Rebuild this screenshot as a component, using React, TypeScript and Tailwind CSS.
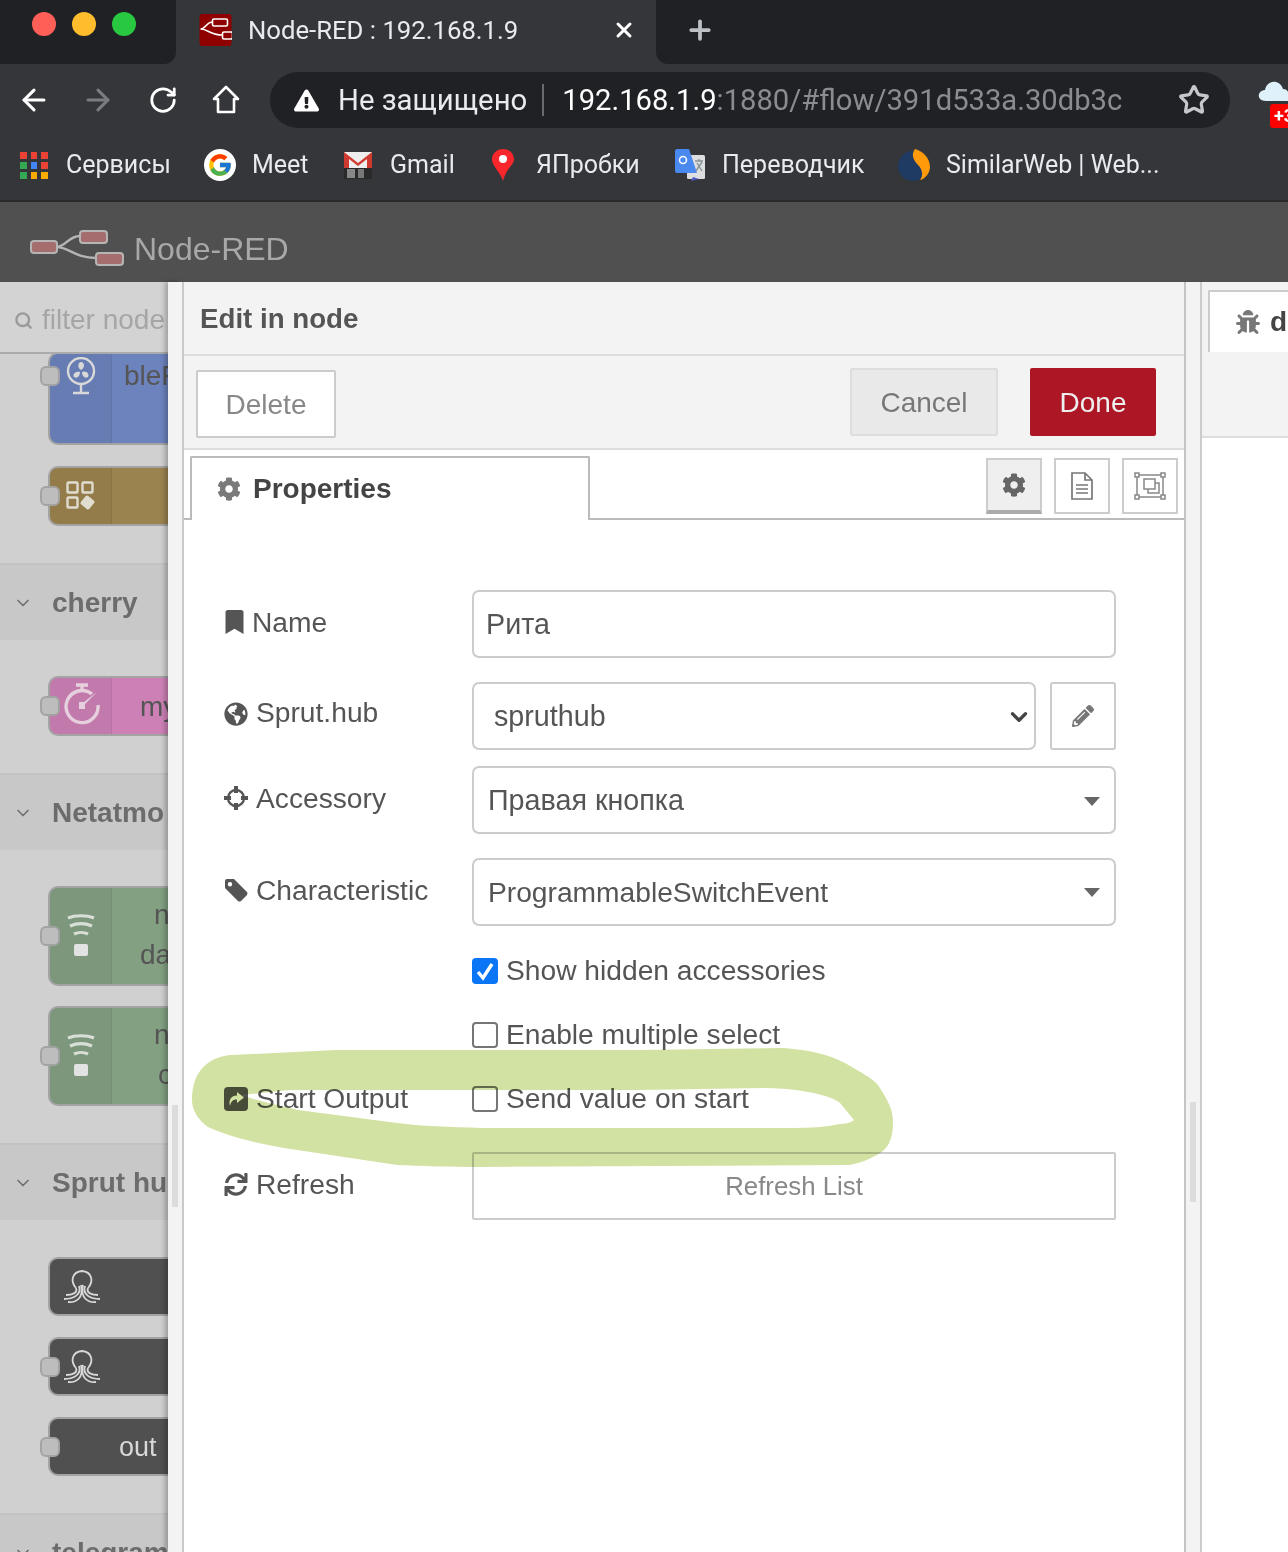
import { ReactNode } from "react";
import { ArrowLeft, ArrowRight, RotateCw, Star, Plus, X, ChevronDown, Search } from "lucide-react";
import { FaBookmark, FaGlobeAmericas, FaSync, FaCog, FaBug, FaPencilAlt, FaExclamationTriangle } from "react-icons/fa";
import { FcGoogle } from "react-icons/fc";

const chrome = "font-['Roboto',sans-serif]";
const app = "font-['Liberation_Sans',Arial,sans-serif]";

function NodeRedMark({ fill, stroke, className }: { fill: string; stroke: string; className?: string }) {
  return (
    <svg viewBox="0 0 94 36" className={className}>
      <path d="M26 17 C36 17 38 6 50 6 M26 17 C40 17 44 28 66 28" fill="none" stroke={stroke} strokeWidth="2.5" />
      <rect x="1" y="11" width="26" height="12" rx="3" fill={fill} stroke={stroke} strokeWidth="2" />
      <rect x="50" y="1" width="27" height="12" rx="3" fill={fill} stroke={stroke} strokeWidth="2" />
      <rect x="66" y="23" width="27" height="12" rx="3" fill={fill} stroke={stroke} strokeWidth="2" />
    </svg>
  );
}

function Bookmark({ icon, label, className }: { icon: ReactNode; label: string; className: string }) {
  return (
    <div className={`flex items-center shrink-0 ${className}`}>
      {icon}
      <span className="text-[25px] text-[#e8eaed] whitespace-nowrap">{label}</span>
    </div>
  );
}

function BrowserChrome() {
  const apps = ["#ea4335", "#ea4335", "#ea4335", "#34a853", "#4285f4", "#ea4335", "#34a853", "#f9ab00", "#f9ab00"];
  return (
    <div className={`${chrome} bg-[#35363a] shrink-0`}>
      {/* Tab strip */}
      <div className="flex h-[64px]">
        <div className="w-[176px] bg-[#202124] rounded-br-[12px] flex items-start gap-[16px] pl-[32px] pt-[12px]">
          <span className="w-[24px] h-[24px] rounded-full bg-[#ff5f57]" />
          <span className="w-[24px] h-[24px] rounded-full bg-[#ffbd2e]" />
          <span className="w-[24px] h-[24px] rounded-full bg-[#28c840]" />
        </div>
        <div className="w-[480px] bg-[#35363a] rounded-t-[16px] flex items-center pl-[23px] pr-[20px] pb-[4px]">
          <svg viewBox="0 0 32 32" className="w-[33px] h-[32px] shrink-0">
            <rect width="32" height="32" rx="3" fill="#8f0000" />
            <path d="M1 15 C6 15 7 8 13 8 M1 15 C9 15 10 21 23 21" fill="none" stroke="#fff" strokeWidth="1.6" />
            <rect x="13" y="5" width="15" height="7" rx="1.5" fill="#8f0000" stroke="#fff" strokeWidth="1.6" />
            <rect x="23" y="18" width="10" height="7" rx="1.5" fill="#8f0000" stroke="#fff" strokeWidth="1.6" />
          </svg>
          <span className="ml-[16px] text-[25.7px] text-[#e8eaed] whitespace-nowrap flex-1">Node-RED : 192.168.1.9</span>
          <X className="w-[24px] h-[24px] text-white" strokeWidth={3} />
        </div>
        <div className="flex-1 bg-[#202124] rounded-bl-[12px] pl-[29px] pt-[15px]">
          <Plus className="w-[30px] h-[30px] text-[#bdc1c6]" strokeWidth={3} />
        </div>
      </div>

      {/* Toolbar */}
      <div className="flex items-center h-[72px] relative">
        <ArrowLeft className="ml-[17px] w-[34px] h-[34px] text-white" strokeWidth={2.2} />
        <ArrowRight className="ml-[30px] w-[34px] h-[34px] text-[#7a7c80]" strokeWidth={2.2} />
        <RotateCw className="ml-[33px] w-[30px] h-[30px] text-white" strokeWidth={2.2} />
        <svg viewBox="0 0 28 30" className="ml-[34px] w-[28px] h-[30px]">
          <path d="M14 2 L26 14 H22 V27 H6 V14 H2 Z" fill="none" stroke="#fff" strokeWidth="2.6" strokeLinejoin="round" />
        </svg>
        <div className="ml-[30px] w-[960px] h-[56px] rounded-full bg-[#202124] flex items-center pl-[24px]">
          <FaExclamationTriangle className="w-[25px] h-[25px] text-white" />
          <span className="ml-[19px] pt-[2px] text-[29.3px] text-[#e8eaed] whitespace-nowrap">Не защищено</span>
          <span className="ml-[15px] w-[2px] h-[32px] bg-[#6a6b6e]" />
          <span className="ml-[18px] pt-[2px] text-[29.2px] text-white whitespace-nowrap">
            192.168.1.9<span className="text-[#8a8c90]">:1880/#flow/391d533a.30db3c</span>
          </span>
          <Star className="ml-auto mr-[20px] w-[32px] h-[32px] text-[#c4c7cb]" strokeWidth={2.4} />
        </div>
        {/* Extension badge */}
        <div className="ml-[28px] relative w-[30px] h-[56px] shrink-0">
          <svg viewBox="0 0 32 22" className="absolute left-0 top-[8px] w-[32px] h-[22px]">
            <path d="M8 21 C2 21 0 17 1 14 C2 11 5 10 7 10 C8 4 13 1 18 2 C22 3 24 6 25 9 C29 9 32 12 32 21 Z" fill="#dff2fb" />
          </svg>
          <span className="absolute left-[12px] top-[32px] w-[30px] h-[24px] bg-[#ff0000] rounded-[3px] text-white text-[18px] font-bold leading-[24px] pl-[4px] whitespace-nowrap">+3</span>
        </div>
      </div>

      {/* Bookmarks */}
      <div className="flex items-center h-[64px] pl-[20px] pb-[6px]">
        <Bookmark
          className="w-[184px]"
          label="Сервисы"
          icon={
            <span className="grid grid-cols-3 gap-x-[4px] gap-y-[3px] w-[28px] mr-[18px]">
              {apps.map((c, i) => (
                <span key={i} className="h-[7px]" style={{ background: c }} />
              ))}
            </span>
          }
        />
        <Bookmark
          className="w-[140px]"
          label="Meet"
          icon={
            <span className="w-[32px] h-[32px] rounded-full bg-white flex items-center justify-center mr-[16px]">
              <FcGoogle className="w-[26px] h-[26px]" />
            </span>
          }
        />
        <Bookmark
          className="w-[148px]"
          label="Gmail"
          icon={
            <svg viewBox="0 0 28 28" className="w-[28px] h-[28px] mr-[18px]">
              <rect y="1" width="28" height="16" fill="#eee" />
              <path d="M0 1 L14 12 L28 1 V17 H23 V8 L14 15 L5 8 V17 H0 Z" fill="#cf3a30" />
              <rect y="17" width="28" height="11" fill="#2a2a2a" />
              <rect x="3" y="18" width="8" height="9" fill="#888" />
              <rect x="14" y="18" width="6" height="9" fill="#777" />
            </svg>
          }
        />
        <Bookmark
          className="w-[183px]"
          label="ЯПробки"
          icon={
            <svg viewBox="0 0 22 32" className="w-[22px] h-[32px] mr-[22px]">
              <path d="M11 0 C17 0 22 4.500 22 10.500 C22 16 15 18 11 32 C9 24 0 17 0 10.500 C0 4.500 5 0 11 0 Z" fill="#f9262b" />
              <circle cx="11" cy="10" r="4" fill="#fff" />
            </svg>
          }
        />
        <Bookmark
          className="w-[223px]"
          label="Переводчик"
          icon={
            <svg viewBox="0 0 30 32" className="w-[30px] h-[32px] mr-[17px]">
              <rect x="12" y="6" width="18" height="24" rx="1.500" fill="#dcdee0" />
              <path d="M18 28 L16 32 L24 30 Z" fill="#4a5bc8" />
              <path d="M2 0 H14 L22 24 H2 C1 24 0 23 0 22 V2 C0 1 1 0 2 0 Z" fill="#4a8af0" />
              <path d="M20 12 H28 M24 10 V12 M21 22 L27 13 M22 14 L27 22" stroke="#8a9499" strokeWidth="1.400" fill="none" />
              <circle cx="8" cy="11" r="3.500" fill="none" stroke="#fff" strokeWidth="1.500" />
            </svg>
          }
        />
        <Bookmark
          className="w-[270px]"
          label="SimilarWeb | Web..."
          icon={
            <svg viewBox="0 0 32 32" className="w-[32px] h-[32px] mr-[16px]">
              <circle cx="15" cy="17" r="15" fill="#1f3a63" />
              <path d="M17 0 C25 2 32 9 32 18 C32 24 27 30 22 31 C26 26 24 20 20 16 C15 11 13 5 17 0 Z" fill="#ff9a0a" />
            </svg>
          }
        />
      </div>
      <div className="h-[2px] bg-[#2a2a2c]" />
    </div>
  );
}

type NodeProps = {
  color: string;
  height: number;
  icon?: ReactNode;
  port?: boolean;
  portClass?: string;
  divider?: boolean;
  label?: ReactNode;
  className?: string;
};

function PaletteNode({ color, height, icon, port = true, portClass = "top-1/2 -translate-y-1/2", divider = true, label, className = "" }: NodeProps) {
  return (
    <div className={`relative ml-[48px] w-[124px] shrink-0 ${className}`} style={{ height }}>
      <div
        className="absolute inset-0 rounded-l-[10px] border-2 border-r-0 border-[#a3a3a3] flex overflow-hidden"
        style={{ background: color }}
      >
        <div className={`w-[62px] shrink-0 flex items-start justify-center ${divider ? "bg-black/5 border-r border-black/5" : ""}`}>{icon}</div>
        {label}
      </div>
      {port && (
        <span className={`absolute left-[-8px] w-[20px] h-[20px] rounded-[6px] bg-[#bdbdbd] border-2 border-[#a3a3a3] ${portClass}`} />
      )}
    </div>
  );
}

function Category({ name, className = "" }: { name: string; className?: string }) {
  return (
    <div className={`flex items-center h-[77px] shrink-0 bg-[#c8c8c8] border-t-2 border-[#c2c2c2] overflow-hidden ${className}`}>
      <ChevronDown className="ml-[13px] w-[20px] h-[20px] shrink-0 text-[#6f6f6f]" strokeWidth={2} />
      <span className="ml-[19px] text-[28px] font-bold text-[#6c6c6c] whitespace-nowrap">{name}</span>
    </div>
  );
}

function FanIcon() {
  return (
    <svg viewBox="0 0 30 38" className="w-[30px] h-[38px] mt-[3px]">
      <circle cx="15" cy="14" r="13" fill="none" stroke="#d8d8d8" strokeWidth="2.4" />
      <path d="M15 13 C11 11 12 5 15 5 C19 5 19 11 15 13 Z M16 15 C20 13 24 17 22 20 C19 22 16 19 16 15 Z M14 15 C10 14 6 17 8 20 C11 22 14 19 14 15 Z" fill="#d8d8d8" />
      <path d="M15 27 V35 M7 36 H23" stroke="#d8d8d8" strokeWidth="2.4" />
    </svg>
  );
}

function GridIcon() {
  return (
    <svg viewBox="0 0 30 30" className="w-[30px] h-[30px] mt-[13px]">
      <g fill="none" stroke="#e0dccf" strokeWidth="2.4">
        <rect x="1.500" y="1.500" width="10" height="10" rx="1" />
        <rect x="16.500" y="1.500" width="10" height="10" rx="1" />
        <rect x="1.500" y="16.500" width="10" height="10" rx="1" />
      </g>
      <rect x="16" y="16" width="11" height="11" rx="2" fill="#e0dccf" transform="rotate(40 21.500 21.500)" />
    </svg>
  );
}

function TimerIcon() {
  return (
    <svg viewBox="0 0 36 42" className="w-[36px] h-[42px] mt-[5px] ml-[2px]">
      <path d="M28 11 A16 16 0 1 0 34 22" fill="none" stroke="#e6d0de" strokeWidth="3.400" />
      <path d="M12 2 H24 M18 2 V7" stroke="#e6d0de" strokeWidth="3.400" />
      <path d="M33 9 L21 21 V26 H15 V19 H20 Z" fill="#e6d0de" />
    </svg>
  );
}

function SignalIcon() {
  return (
    <svg viewBox="0 0 28 44" className="w-[28px] h-[44px] mt-[26px]">
      <g fill="none" stroke="#d9dfd6" strokeWidth="3.200">
        <path d="M1 4 C8 1 20 1 27 4" />
        <path d="M3 12 C10 9 18 9 25 12" />
        <path d="M7 20 C11 18 17 18 21 20" />
      </g>
      <rect x="7" y="30" width="14" height="12" rx="2" fill="#e2e2e2" />
    </svg>
  );
}

function OctopusIcon() {
  return (
    <svg viewBox="0 0 38 34" className="w-[38px] h-[34px] mt-[11px] ml-[2px]">
      <g fill="none" stroke="#d8d8d8" strokeWidth="1.800">
        <path d="M13 18 C7 11 9 2 19 1 C29 2 31 11 25 18" />
        <path d="M13 18 C15 23 9 25 3 25" />
        <path d="M16 16 C19 25 10 29 1 29" />
        <path d="M18 15 C21 28 13 33 5 32" />
        <path d="M25 18 C23 23 29 25 35 25" />
        <path d="M22 16 C19 25 28 29 37 29" />
        <path d="M20 15 C17 28 25 33 33 32" />
      </g>
    </svg>
  );
}

function Palette() {
  return (
    <div className={`${app} w-[168px] shrink-0 bg-[#d0d0d0] overflow-hidden flex flex-col`}>
      <div className="h-[70px] shrink-0 flex items-center pl-[14px] pt-[6px] bg-[#d3d3d3]">
        <Search className="w-[19px] h-[19px] shrink-0 text-[#9a9a9a]" strokeWidth={3} />
        <span className="ml-[9px] text-[28px] text-[#a6a6a6] whitespace-nowrap">filter node</span>
      </div>
      <div className="h-[2px] bg-[#ababab] shrink-0 relative z-10" />
      <PaletteNode
        color="#6c83bd"
        height={93}
        icon={<FanIcon />}
        portClass="top-[14px]"
        className="-mt-[2px]"
        label={<span className="ml-[12px] mt-[1px] text-[28px] text-[#555] whitespace-nowrap">bleF</span>}
      />
      <PaletteNode color="#9b834f" height={60} icon={<GridIcon />} className="mt-[21px]" />
      <Category name="cherry" className="mt-[37px]" />
      <PaletteNode
        color="#cd80b6"
        height={60}
        icon={<TimerIcon />}
        className="mt-[36px]"
        label={<span className="ml-[28px] mt-[8px] text-[28px] text-[#555] whitespace-nowrap">my</span>}
      />
      <Category name="Netatmo" className="mt-[37px]" />
      <PaletteNode
        color="#83a083"
        height={100}
        icon={<SignalIcon />}
        className="mt-[36px]"
        label={
          <span className="ml-[28px] mt-[7px] text-[28px] leading-[40px] text-[#555] whitespace-nowrap">
            <span className="block pl-[14px]">n</span>
            <span className="block">da</span>
          </span>
        }
      />
      <PaletteNode
        color="#83a083"
        height={100}
        icon={<SignalIcon />}
        className="mt-[20px]"
        label={
          <span className="ml-[42px] mt-[7px] text-[28px] leading-[40px] text-[#555] whitespace-nowrap">
            <span className="block">n</span>
            <span className="block pl-[4px]">c</span>
          </span>
        }
      />
      <Category name="Sprut hu" className="mt-[37px]" />
      <PaletteNode color="#505050" height={59} port={false} divider={false} icon={<OctopusIcon />} className="mt-[37px]" />
      <PaletteNode color="#505050" height={59} divider={false} icon={<OctopusIcon />} className="mt-[21px]" />
      <PaletteNode
        color="#505050"
        height={59}
        divider={false}
        className="mt-[21px]"
        label={<span className="ml-[7px] mt-[8px] text-[27px] text-[#d8d8d8] whitespace-nowrap">out</span>}
      />
      <Category name="telegram" className="mt-[37px]" />
    </div>
  );
}

function Field({ icon, label, labelClass = "ml-[8px]", children, className }: { icon: ReactNode; label: string; labelClass?: string; children: ReactNode; className: string }) {
  return (
    <div className={`flex items-center ${className}`}>
      <div className="w-[248px] shrink-0 flex items-center h-[68px] -mt-[4px] text-[#555] text-[28.2px]">
        <span className="w-[24px] flex shrink-0">{icon}</span>
        <span className={labelClass}>{label}</span>
      </div>
      {children}
    </div>
  );
}

function InputBox({ children, className = "w-[644px]" }: { children: ReactNode; className?: string }) {
  return (
    <div className={`${className} h-[68px] border-2 border-[#ccc] rounded-[7px] bg-white flex items-center pt-[2px] text-[28.7px] text-[#555]`}>
      {children}
    </div>
  );
}

function Check({ checked, label, className }: { checked?: boolean; label: string; className: string }) {
  return (
    <div className={`flex items-center pl-[248px] h-[28px] text-[28.2px] text-[#555] ${className}`}>
      <span
        className={`w-[26px] h-[26px] rounded-[4px] flex items-center justify-center shrink-0 ${
          checked ? "bg-[#0a76f6]" : "bg-white border-2 border-[#767676]"
        }`}
      >
        {checked && (
          <svg viewBox="0 0 26 26" className="w-[26px] h-[26px]">
            <path d="M6 14 L11 20 L20 6" fill="none" stroke="#fff" strokeWidth="3.400" />
          </svg>
        )}
      </span>
      <span className="ml-[8px] -mt-[2px] whitespace-nowrap">{label}</span>
    </div>
  );
}

function TabIcon({ active, children }: { active?: boolean; children: ReactNode }) {
  return (
    <div
      className={`w-[56px] h-[56px] border-2 border-[#ccc] flex items-center justify-center ${
        active ? "bg-[#efefef] border-b-[4px] border-b-[#aaa]" : "bg-white"
      }`}
    >
      {children}
    </div>
  );
}

function Tray() {
  return (
    <div className={`${app} w-[1002px] shrink-0 flex flex-col bg-white border-r-2 border-[#c4c4c4]`}>
      <div className="h-[74px] shrink-0 bg-[#f3f3f3] border-b-2 border-[#ddd] flex items-center pl-[16px] pt-[2px]">
        <span className="text-[27.7px] font-bold text-[#555]">Edit in node</span>
      </div>
      <div className="h-[94px] shrink-0 bg-[#f3f3f3] border-b-2 border-[#ddd] flex items-start pl-[12px] pr-[28px]">
        <div className="mt-[14px] w-[140px] h-[68px] bg-white border-2 border-[#ccc] rounded-[2px] flex items-center justify-center pt-[2px] text-[28px] text-[#888]">
          Delete
        </div>
        <div className="mt-[12px] ml-auto w-[148px] h-[68px] bg-[#e9e9e9] border-2 border-[#ddd] rounded-[2px] flex items-center justify-center pt-[2px] text-[28px] text-[#777]">
          Cancel
        </div>
        <div className="mt-[12px] ml-[32px] w-[126px] h-[68px] bg-[#ad1625] rounded-[2px] flex items-center justify-center pt-[2px] text-[28px] text-[#eee]">
          Done
        </div>
      </div>
      {/* Tabs */}
      <div className="h-[70px] shrink-0 border-b-2 border-[#bbb] flex items-start relative pl-[6px] pr-[6px]">
        <div className="mt-[6px] w-[400px] h-[64px] bg-white border-2 border-b-0 border-[#bbb] rounded-t-[2px] flex items-center pl-[25px] text-[28px] font-bold text-[#444]">
          <FaCog className="w-[24px] h-[24px] text-[#7a7a7a]" />
          <span className="ml-[12px]">Properties</span>
        </div>
        <div className="ml-auto mt-[8px] flex gap-[12px]">
          <TabIcon active>
            <FaCog className="w-[24px] h-[24px] text-[#666]" />
          </TabIcon>
          <TabIcon>
            <svg viewBox="0 0 24 28" className="w-[24px] h-[28px]">
              <path d="M2 1 H15 L22 8 V27 H2 Z M15 1 V8 H22 M6 13 H18 M6 17 H18 M6 21 H18" fill="none" stroke="#777" strokeWidth="1.700" />
            </svg>
          </TabIcon>
          <TabIcon>
            <svg viewBox="0 0 32 28" className="w-[32px] h-[28px]">
              <g fill="none" stroke="#888" strokeWidth="1.500">
                <rect x="3" y="3" width="26" height="22" />
                <rect x="10" y="7" width="11" height="10" />
                <path d="M21 11 H25 V21 H14 V17" />
                <rect x="1" y="1" width="4" height="4" fill="#fff" />
                <rect x="27" y="1" width="4" height="4" fill="#fff" />
                <rect x="1" y="23" width="4" height="4" fill="#fff" />
                <rect x="27" y="23" width="4" height="4" fill="#fff" />
              </g>
            </svg>
          </TabIcon>
        </div>
      </div>
      {/* Form */}
      <div className="pl-[40px] pt-[70px] text-[#555]">
        <Field className="" icon={<FaBookmark className="w-[21px] h-[24px] text-[#555]" />} label="Name" labelClass="ml-[4px]">
          <InputBox>
            <span className="ml-[12px]">Рита</span>
          </InputBox>
        </Field>
        <Field className="mt-[24px]" icon={<FaGlobeAmericas className="w-[24px] h-[24px] text-[#555]" />} label="Sprut.hub" labelClass="ml-[8px] -mt-[4px]">
          <InputBox className="w-[564px] relative">
            <span className="ml-[20px]">spruthub</span>
            <ChevronDown className="absolute right-[2px] w-[26px] h-[26px] text-[#444]" strokeWidth={3} />
          </InputBox>
          <div className="ml-[14px] w-[66px] h-[68px] border-2 border-[#ccc] rounded-[3px] flex items-center justify-center">
            <FaPencilAlt className="w-[22px] h-[22px] text-[#777]" />
          </div>
        </Field>
        <Field
          className="mt-[16px]"
          icon={
            <svg viewBox="0 0 24 24" className="w-[24px] h-[24px]">
              <circle cx="12" cy="12" r="8" fill="none" stroke="#555" strokeWidth="2.400" />
              <path d="M10 0 H14 V7 H10 Z M10 17 H14 V24 H10 Z M0 10 V14 H7 V10 Z M17 10 V14 H24 V10 Z" fill="#555" />
            </svg>
          }
          label="Accessory"
        >
          <InputBox className="w-[644px] relative">
            <span className="ml-[14px]">Правая кнопка</span>
            <span className="absolute right-[14px] w-0 h-0 border-x-[8px] border-x-transparent border-t-[9px] border-t-[#666]" />
          </InputBox>
        </Field>
        <Field
          className="mt-[24px]"
          icon={
            <svg viewBox="0 0 24 24" className="w-[24px] h-[24px]">
              <path
                fillRule="evenodd"
                fill="#555"
                d="M1 3 Q1 1 3 1 H10 L23 14 Q24 15.500 23 17 L17 23 Q15.500 24 14 23 L1 10 Z M6 4 A2.200 2.200 0 1 0 6 8.400 A2.200 2.200 0 1 0 6 4 Z"
              />
            </svg>
          }
          label="Characteristic"
        >
          <InputBox className="w-[644px] relative !pt-0">
            <span className="ml-[14px] text-[28.2px]">ProgrammableSwitchEvent</span>
            <span className="absolute right-[14px] w-0 h-0 border-x-[8px] border-x-transparent border-t-[9px] border-t-[#666]" />
          </InputBox>
        </Field>
        <Check checked label="Show hidden accessories" className="mt-[31px]" />
        <Check label="Enable multiple select" className="mt-[36px]" />
        <div className="flex items-center mt-[36px] h-[28px] text-[28.2px] text-[#555]">
          <div className="w-[248px] flex items-center shrink-0">
            <svg viewBox="0 0 24 24" className="w-[24px] h-[24px] shrink-0">
              <rect width="24" height="24" rx="4" fill="#555" />
              <path d="M13 5 L20 10.500 L13 16 V12.500 C9 12.500 7 14 6 19 C4.500 13 7 8.500 13 8.500 Z" fill="#fff" />
            </svg>
            <span className="ml-[8px] -mt-[2px]">Start Output</span>
          </div>
          <span className="w-[26px] h-[26px] rounded-[4px] bg-white border-2 border-[#767676] shrink-0" />
          <span className="ml-[8px] -mt-[2px] whitespace-nowrap">Send value on start</span>
        </div>
        <Field className="mt-[39px]" icon={<FaSync className="w-[24px] h-[23px] text-[#555]" />} label="Refresh">
          <div className="w-[644px] h-[68px] border-2 border-[#ccc] rounded-[2px] flex items-center justify-center text-[25.8px] text-[#888]">
            Refresh List
          </div>
        </Field>
      </div>
    </div>
  );
}

function RightSidebar() {
  return (
    <div className={`${app} flex-1 border-l-2 border-[#ccc] bg-white flex flex-col overflow-hidden`}>
      <div className="h-[156px] shrink-0 bg-[#f3f3f3] border-b-2 border-[#ddd] pl-[6px] pt-[8px]">
        <div className="w-[80px] h-[62px] bg-white border-l-2 border-t-2 border-[#ccc] rounded-tl-[2px] flex items-center pl-[26px] whitespace-nowrap overflow-hidden">
          <FaBug className="w-[24px] h-[24px] shrink-0 text-[#777]" />
          <span className="ml-[10px] text-[28px] font-bold text-[#444]">d</span>
        </div>
      </div>
    </div>
  );
}

export default function App() {
  return (
    <div className="relative w-[1288px] h-[1552px] overflow-hidden flex flex-col bg-white">
      <BrowserChrome />
      {/* Node-RED header */}
      <div className={`${app} h-[80px] shrink-0 bg-[#505050] flex items-center pl-[30px] pt-[14px]`}>
        <NodeRedMark fill="#a56d6d" stroke="#b5b5b5" className="w-[94px] h-[36px] mt-[-2px]" />
        <span className="ml-[10px] text-[32px] text-[#a8a8a8]">Node-RED</span>
      </div>
      <div className="flex flex-1 min-h-0">
        <Palette />
        {/* left handle */}
        <div className="relative z-10 w-[14px] shrink-0 bg-[#f3f3f3] shadow-[-3px_0_5px_rgba(0,0,0,0.25)] pl-[4px] pt-[823px]">
          <div className="w-[6px] h-[102px] bg-[#dcdcdc]" />
        </div>
        <div className="w-[2px] shrink-0 bg-[#ccc]" />
        <Tray />
        {/* right handle */}
        <div className="w-[14px] shrink-0 bg-[#f3f3f3] pl-[4px] pt-[820px]">
          <div className="w-[6px] h-[100px] bg-[#dcdcdc]" />
        </div>
        <RightSidebar />
      </div>
      {/* Hand-drawn marker highlight over the screenshot */}
      <svg viewBox="0 0 1288 1552" className="absolute inset-0 w-[1288px] h-[1552px] pointer-events-none mix-blend-multiply z-20">
        <path
          fillRule="evenodd"
          fill="#d2e2a3"
          d="M192 1100 C192 1068 212 1056 232 1055 L336 1050 L640 1050 L784 1048 C810 1050 830 1055 845 1063 C862 1073 872 1078 878 1085 C888 1100 893 1110 893 1122 C893 1140 888 1150 875 1156 C868 1160 860 1163 850 1165 L482 1167 C450 1167 420 1166 397 1165 L284 1148 C250 1142 225 1135 208 1127 C198 1120 192 1110 192 1100 Z M241 1095 L290 1090 L640 1090 L765 1088 C790 1088 812 1092 825 1096 C832 1098 838 1101 840 1103 L854 1120 C850 1123 845 1124 840 1124 C825 1127 810 1128 793 1128 L482 1128 C450 1127 420 1126 397 1123 L298 1110 C280 1106 255 1100 241 1095 Z"
        />
      </svg>
    </div>
  );
}
